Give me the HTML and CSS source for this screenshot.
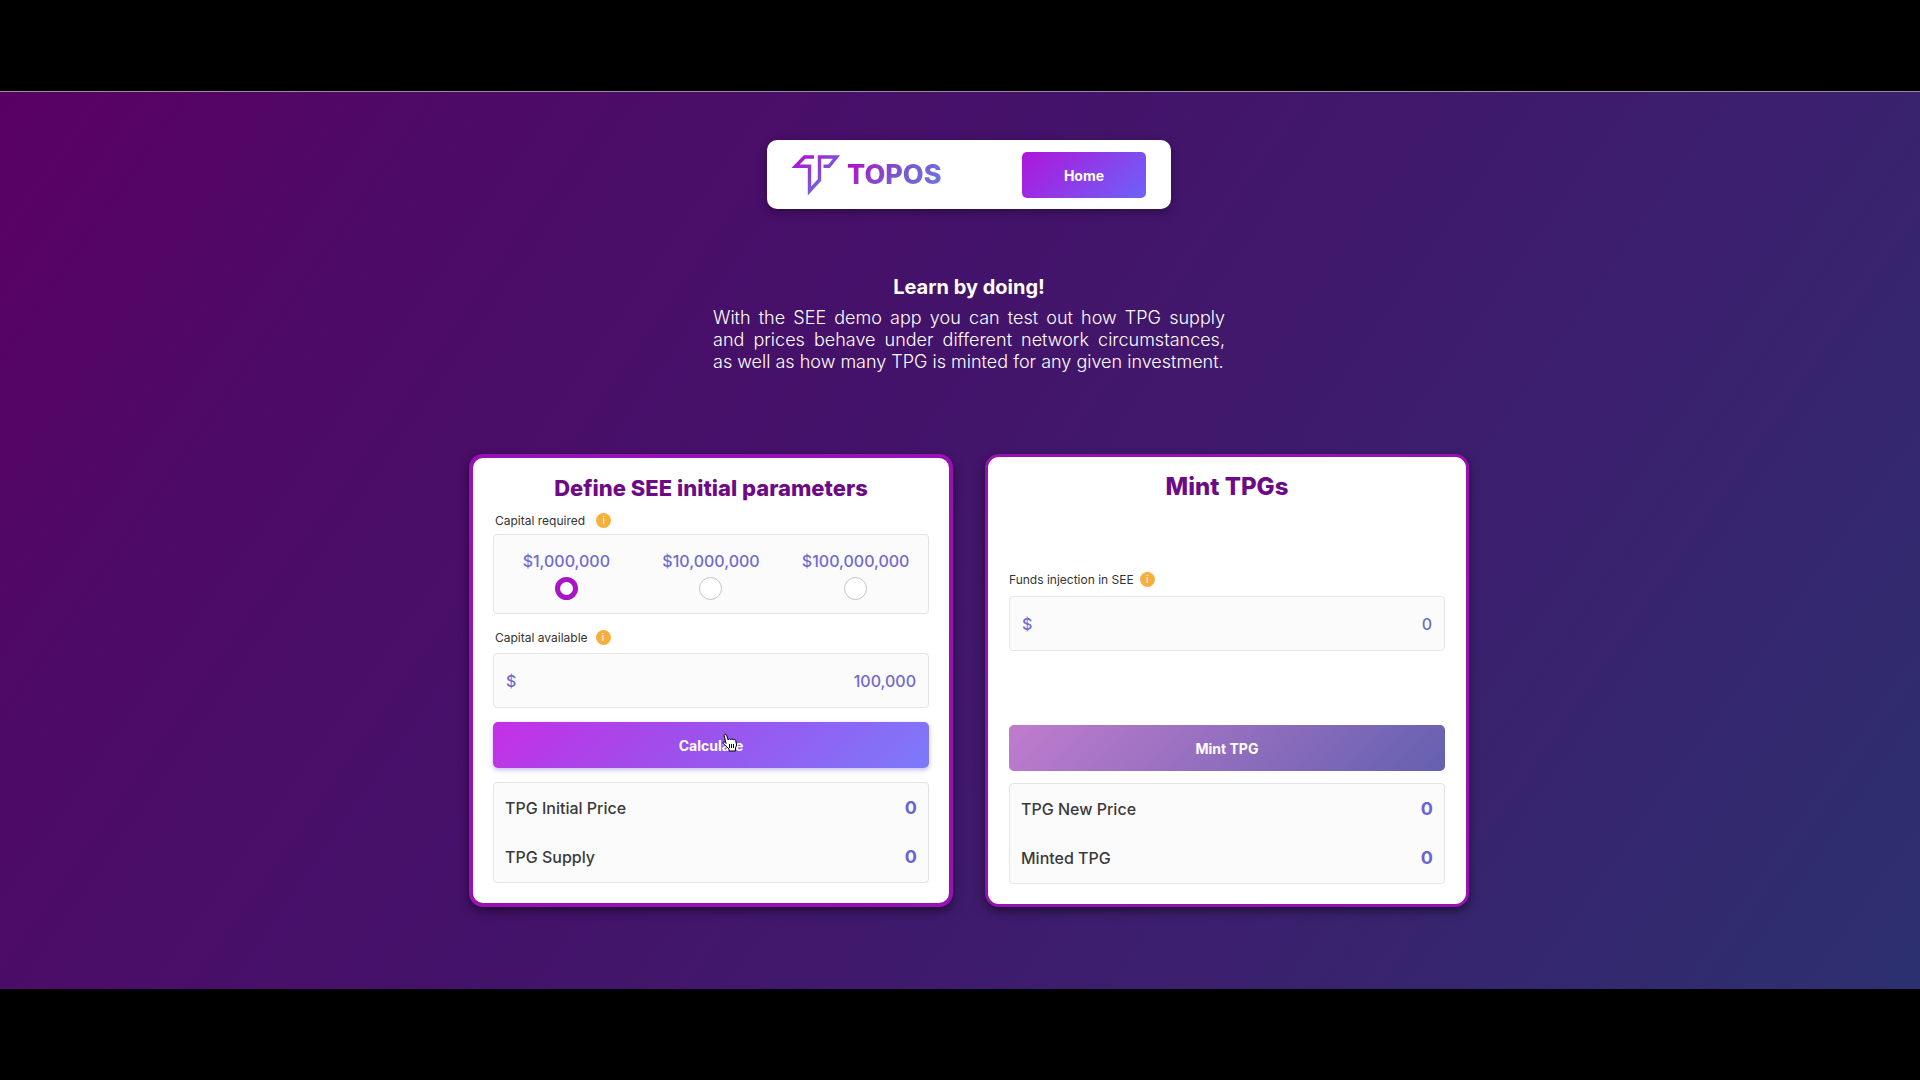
FILE: index.html
```html
<!DOCTYPE html>
<html lang="en">
<head>
  <meta charset="utf-8">
  <title>Topos SEE demo</title>
  <link rel="stylesheet" href="styles.css">
</head>
<body>

<main class="page">
  <nav class="navbar">
    <a class="logo" href="#">
      <svg class="logo-mark" width="50" height="42" viewBox="0 0 50 42" fill="none">
        <defs>
          <linearGradient id="mark" gradientUnits="userSpaceOnUse" x1="4" y1="4" x2="32" y2="36">
            <stop offset="0" stop-color="#b30fd0"/>
            <stop offset="1" stop-color="#6b6bdc"/>
          </linearGradient>
        </defs>
        <path stroke="url(#mark)" stroke-width="3.400" d="M23 3H13.500L4.500 12.200H18.500V37L28.500 26V3H45.500L38 12.200H32.500"/>
      </svg>
      <span class="logo-text">TOPOS</span>
    </a>
    <button type="button" class="btn btn-home">Home</button>
  </nav>

  <header class="intro">
    <h1>Learn by doing!</h1>
    <p>With the SEE demo app you can test out how TPG supply and prices behave under different network circumstances, as well as how many TPG is minted for any given investment.</p>
  </header>

  <div class="cards">
    <form class="card" onsubmit="return false">
      <h2>Define SEE initial parameters</h2>

      <div class="label-row">
        <span id="required-label">Capital required</span>
        <span class="info">i</span>
      </div>
      <div class="box amounts" role="radiogroup" aria-labelledby="required-label">
        <label>$1,000,000 <input type="radio" name="required" checked></label>
        <label>$10,000,000 <input type="radio" name="required"></label>
        <label>$100,000,000 <input type="radio" name="required"></label>
      </div>

      <div class="label-row label-available">
        <label for="available">Capital available</label>
        <span class="info">i</span>
      </div>
      <div class="box money">
        <span>$</span>
        <input type="text" id="available" value="100,000">
      </div>

      <button type="submit" class="btn btn-calculate">Calculate
        <svg class="pointer" width="16" height="19" viewBox="0 0 16 19">
          <path fill="#fff" stroke="#000" stroke-linejoin="round" d="M4 10.500 2.200 2.700C1.900 1 3.900.5 4.500 2L6.200 7C6.300 5.500 8.300 5.400 8.700 6.800 9 5.500 10.900 5.600 11.300 7 11.800 6 13.500 6.300 13.700 7.600L14.600 12 13.500 15V18H7V16L4 13 1 10.500C.2 9.300 2 8.300 3 9.300Z"/>
          <path stroke="#000" d="M7.500 11v4M9.500 11v4M11.500 11v4"/>
        </svg>
      </button>

      <dl class="box results">
        <div><dt>TPG Initial Price</dt><dd>0</dd></div>
        <div><dt>TPG Supply</dt><dd>0</dd></div>
      </dl>
    </form>

    <form class="card card-mint" onsubmit="return false">
      <h2>Mint TPGs</h2>

      <div class="label-row">
        <label for="funds">Funds injection in SEE</label>
        <span class="info">i</span>
      </div>
      <div class="box money">
        <span>$</span>
        <input type="text" id="funds" value="0">
      </div>

      <button type="submit" class="btn btn-mint">Mint TPG</button>

      <dl class="box results">
        <div><dt>TPG New Price</dt><dd>0</dd></div>
        <div><dt>Minted TPG</dt><dd>0</dd></div>
      </dl>
    </form>
  </div>
</main>

</body>
</html>
```

FILE: styles.css
```css
* {
  box-sizing: border-box;
}

body {
  margin: 0;
  padding: 91px 0;
  min-height: 100vh;
  display: flex;
  flex-direction: column;
  background: #000;
  font-family: Inter, "Liberation Sans", sans-serif;
}

.page {
  flex: 1;
  display: flex;
  flex-direction: column;
  align-items: center;
  padding: 48px 0 80px 18px;
  border-top: 1px solid #9d8aa6;
  background: linear-gradient(125deg, #5a0064, #4e0a67 18%, #44126a 42%, #3b206e 72%, #2c3070);
}

.navbar {
  display: flex;
  align-items: center;
  justify-content: space-between;
  width: 404px;
  padding: 12px 25px 11px 24px;
  border-radius: 10px;
  background: #fff;
  box-shadow: 0 3px 8px rgba(0, 0, 0, .35);
}

.logo {
  display: flex;
  align-items: center;
  gap: 6px;
  text-decoration: none;
}

.logo-text {
  font-size: 27px;
  line-height: 32px;
  font-weight: 800;
  color: transparent;
  background: linear-gradient(135deg, #b015c8 10%, #7a55d0 50%, #6b7be0);
  -webkit-background-clip: text;
  background-clip: text;
}

.btn {
  height: 46px;
  border: 0;
  border-radius: 5px;
  color: #fff;
  font-family: inherit;
  font-size: 14px;
  font-weight: 700;
  cursor: pointer;
}

.btn-home {
  width: 124px;
  background: linear-gradient(135deg, #ae16dc, #6d63f8);
}

.intro {
  width: 512px;
  margin: 64px 0 81px;
  color: #fff;
}

.intro h1 {
  margin: 0;
  font-size: 20px;
  line-height: 28px;
  font-weight: 700;
  text-align: center;
}

.intro p {
  margin: 6px 0 0;
  font-size: 18px;
  line-height: 22px;
  font-weight: 300;
  text-align: justify;
}

.cards {
  display: flex;
  gap: 32px;
}

.card {
  display: flex;
  flex-direction: column;
  width: 484px;
  padding: 16px 20px 20px;
  border: 4px solid #9911b4;
  border-radius: 14px;
  background: #fff;
  box-shadow: 0 4px 10px rgba(0, 0, 0, .5);
}

.card h2 {
  margin: 0;
  font-size: 22px;
  line-height: 28px;
  font-weight: 800;
  text-align: center;
  color: #6d0b87;
}

.label-row {
  display: flex;
  align-items: center;
  gap: 11px;
  height: 16px;
  margin: 10px 0 6px 2px;
  font-size: 12px;
  color: #333;
}

.label-available {
  gap: 8px;
  margin: 15px 0 8px 2px;
}

.info {
  width: 15px;
  height: 15px;
  border-radius: 50%;
  background: #f5b03c;
  color: #fff;
  font-size: 10px;
  line-height: 15px;
  text-align: center;
}

.box {
  border: 1px solid #e4e4e4;
  border-radius: 4px;
  background: #fbfbfb;
}

.amounts {
  display: grid;
  grid-template-columns: repeat(3, 1fr);
  height: 80px;
  padding-top: 15px;
  color: #7069cf;
  font-size: 16px;
  line-height: 22px;
  font-weight: 500;
}

.amounts label {
  display: flex;
  flex-direction: column;
  align-items: center;
  gap: 5px;
}

.amounts input {
  appearance: none;
  width: 23px;
  height: 23px;
  margin: 0;
  border: 1px solid #c4c4c4;
  border-radius: 50%;
  background: #fff;
}

.amounts input:checked {
  border: 5px solid #a815c6;
}

.money {
  display: flex;
  align-items: center;
  height: 55px;
  padding: 0 12px;
  color: #7069cf;
  font-size: 16px;
  font-weight: 500;
}

.money input {
  flex: 1;
  min-width: 0;
  padding: 0;
  border: 0;
  outline: 0;
  background: none;
  color: inherit;
  font: inherit;
  text-align: right;
}

.btn-calculate {
  position: relative;
  margin-top: 14px;
  background: linear-gradient(135deg, #c52fe5, #a04dec 40%, #7d7afa);
  box-shadow: 0 2px 5px rgba(120, 80, 220, .4);
}

/* hand pointer, lies over the button text */
.pointer {
  position: absolute;
  top: 11px;
  left: 229px;
}

.btn-mint {
  margin-top: 74px;
  background: linear-gradient(135deg, #c07ccd, #6460b0);
}

.results {
  height: 101px;
  margin: 14px 0 0;
  padding: 12px 11px;
  font-size: 16px;
  line-height: 26px;
  font-weight: 500;
  color: #3a3a3a;
}

.results div {
  display: flex;
  justify-content: space-between;
}

.results div + div {
  margin-top: 23px;
}

.results dd {
  margin: 0;
  color: #6a63d6;
  font-size: 18px;
  font-weight: 700;
}

.card-mint {
  padding: 14px 21px 20px;
  border-width: 3px;
}

.card-mint h2 {
  font-size: 24px;
  line-height: 32px;
}

.card-mint .label-row {
  gap: 6px;
  margin: 68px 0 9px;
}

.card-mint .results {
  margin-top: 12px;
}
```
